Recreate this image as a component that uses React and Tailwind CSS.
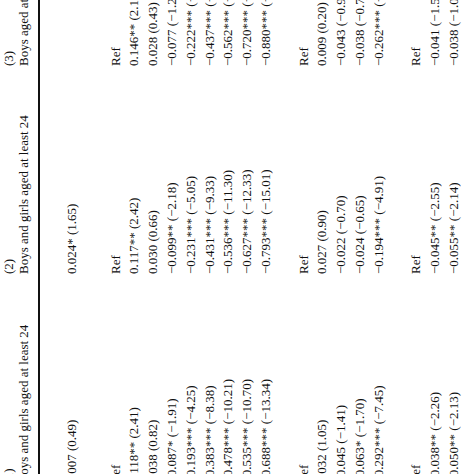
import React from "react";

const M = "\u2212";

const col1 = {
  n: "(1)",
  head: "Boys and girls aged at least 24",
  first: "0.007 (0.49)",
  a: ["Ref", "0.118** (2.41)", "0.038 (0.82)", `${M}0.087* (${M}1.91)`, `${M}0.193*** (${M}4.25)`, `${M}0.383*** (${M}8.38)`, `${M}0.478*** (${M}10.21)`, `${M}0.535*** (${M}10.70)`, `${M}0.688*** (${M}13.34)`],
  b: ["Ref", "0.032 (1.05)", `${M}0.045 (${M}1.41)`, `${M}0.063* (${M}1.70)`, `${M}0.292*** (${M}7.45)`],
  c: ["Ref", `${M}0.038** (${M}2.26)`, `${M}0.050** (${M}2.13)`],
};
const col2 = {
  n: "(2)",
  head: "Boys and girls aged at least 24",
  first: "0.024* (1.65)",
  a: ["Ref", "0.117** (2.42)", "0.030 (0.66)", `${M}0.099** (${M}2.18)`, `${M}0.231*** (${M}5.05)`, `${M}0.431*** (${M}9.33)`, `${M}0.536*** (${M}11.30)`, `${M}0.627*** (${M}12.33)`, `${M}0.793*** (${M}15.01)`],
  b: ["Ref", "0.027 (0.90)", `${M}0.022 (${M}0.70)`, `${M}0.024 (${M}0.65)`, `${M}0.194*** (${M}4.91)`],
  c: ["Ref", `${M}0.045** (${M}2.55)`, `${M}0.055** (${M}2.14)`],
};
const col3 = {
  n: "(3)",
  head: "Boys aged at least 24",
  first: "",
  a: ["Ref", "0.146** (2.15)", "0.028 (0.43)", `${M}0.077 (${M}1.24)`, `${M}0.222*** (${M}4.52)`, `${M}0.437*** (${M}8.41)`, `${M}0.562*** (${M}10.41)`, `${M}0.720*** (${M}12.72)`, `${M}0.880*** (${M}14.85)`],
  b: ["Ref", "0.009 (0.20)", `${M}0.043 (${M}0.96)`, `${M}0.038 (${M}0.74)`, `${M}0.262*** (${M}5.84)`],
  c: ["Ref", `${M}0.041 (${M}1.53)`, `${M}0.038 (${M}1.05)`],
};

function Rows({ items }) {
  return items.map((t, i) => (
    <div key={i} className="h-[18.8px]">
      {t}
    </div>
  ));
}

function Body({ col, w }) {
  return (
    <div className={`${w} shrink-0 flex flex-col`}>
      <div className="h-[18.8px] mt-[22.6px]">{col.first}</div>
      <div className="h-[25.2px]" />
      <Rows items={col.a} />
      <div className="h-[18.8px]" />
      <Rows items={col.b} />
      <div className="h-[18.8px]" />
      <Rows items={col.c} />
    </div>
  );
}

export default function App() {
  const cols = [col1, col2, col3];
  const widths = ["w-[209.5px]", "w-[208px]", "w-[208px]"];
  return (
    <div className="w-[474px] h-[474px] overflow-hidden bg-white relative">
      <div className="w-[474px] h-[474px] -rotate-90 font-['Liberation_Serif','Times_New_Roman',serif] text-[13px] text-[#111] whitespace-nowrap">
        <div className="flex ml-[-9.5px] pt-[1px] leading-[15px]">
          {cols.map((c, i) => (
            <div key={c.n} className={`${widths[i]} shrink-0`}>{c.n}</div>
          ))}
        </div>
        <div className="flex ml-[-9.5px] leading-[15px]">
          {cols.map((c, i) => (
            <div key={c.n} className={`${widths[i]} shrink-0`}>{c.head}</div>
          ))}
        </div>
        <div className="h-[2px] bg-[#111] mt-[7px]" />
        <div className="flex ml-[-9.5px] leading-[18.8px]">
          <Body col={col1} w="w-[209.5px]" />
          <Body col={col2} w="w-[208px]" />
          <Body col={col3} w="w-[208px]" />
        </div>
      </div>
    </div>
  );
}
